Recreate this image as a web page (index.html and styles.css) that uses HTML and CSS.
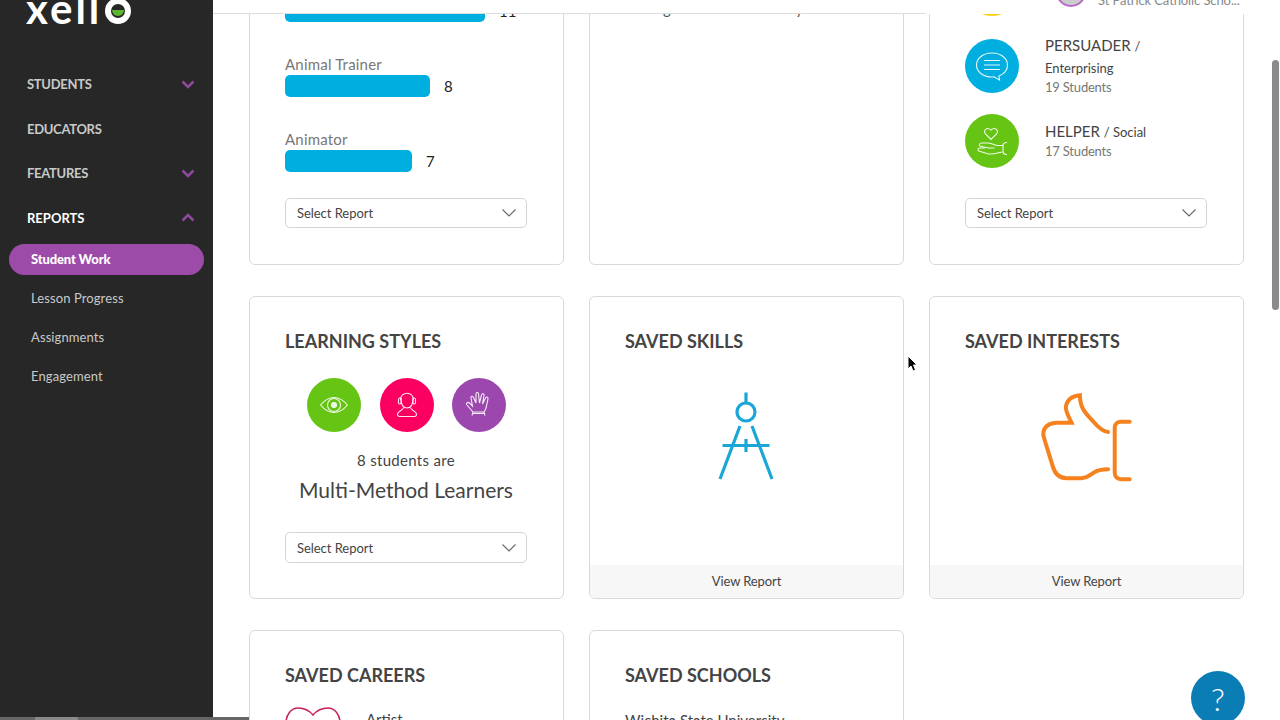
FILE: index.html
```html
<!DOCTYPE html>
<html lang="en">
<head>
    <meta charset="UTF-8">
    <title>Xello Reports</title>
    <link rel="stylesheet" href="styles.css">
</head>
<body>
    <!-- Sidebar -->
    <nav class="sidebar">
        <div class="logo"><span>xell</span><i class="logo-o"><b></b></i></div>
        <ul class="nav">
            <li class="nav-item">STUDENTS <svg class="chev" viewBox="0 0 14 9"><path d="M1.5 1.5L7 7l5.5-5.5"/></svg></li>
            <li class="nav-item">EDUCATORS</li>
            <li class="nav-item">FEATURES <svg class="chev" viewBox="0 0 14 9"><path d="M1.5 1.5L7 7l5.5-5.5"/></svg></li>
            <li class="nav-item active">REPORTS <svg class="chev" viewBox="0 0 14 9"><path d="M1.5 7.5L7 2l5.5 5.5"/></svg></li>
        </ul>
        <ul class="subnav">
            <li class="current">Student Work</li>
            <li>Lesson Progress</li>
            <li>Assignments</li>
            <li>Engagement</li>
        </ul>
    </nav>

    <!-- Report cards, scrolled part way down -->
    <main class="content">
        <div class="cards">
            <section class="card bottom">
                <div class="bars">
                    <div class="bar-row"><div class="bar-label">Animal Caretaker</div><div class="bar-line"><div class="bar" style="width:200px"></div><span>11</span></div></div>
                    <div class="bar-row"><div class="bar-label">Animal Trainer</div><div class="bar-line"><div class="bar" style="width:145px"></div><span>8</span></div></div>
                    <div class="bar-row"><div class="bar-label">Animator</div><div class="bar-line"><div class="bar" style="width:127px"></div><span>7</span></div></div>
                </div>
                <div class="select">Select Report <svg class="select-arrow" viewBox="0 0 14 8"><path d="M.5.5L7 7l6.5-6.5"/></svg></div>
            </section>

            <section class="card middle-top">
                <p class="clipped-line">Management and Industry</p>
            </section>

            <section class="card bottom">
                <div class="types">
                    <div class="type first">
                        <div class="circle yellow"></div>
                    </div>
                    <div class="type">
                        <div class="circle blue">
                            <svg viewBox="0 0 54 54"><path d="M27 14c9 0 15.5 5.300 15.5 12 0 5-3.500 9-8.500 11l.5 4-5.500-3.200c-.7.1-1.400.2-2 .2-9 0-15.500-5.300-15.500-12S18 14 27 14z"/><path d="M19 21.500h16M19 26h16M19 30.500h16"/></svg>
                        </div>
                        <div class="type-text">
                            <div class="type-name">PERSUADER <small>/</small></div>
                            <div class="type-sub">Enterprising</div>
                            <div class="type-count">19 Students</div>
                        </div>
                    </div>
                    <div class="type">
                        <div class="circle green">
                            <svg viewBox="0 0 54 54"><path d="M26 25.500l-5.500-5.500c-3-3.500 1.500-7.500 5.500-4 4-3.500 8.500.5 5.500 4z"/><path d="M38 31.500h-6c-3-1-6-2.500-9-2.500h-6.500c-2 0-3 2.500-1 3.300l8 1.700h6"/><path d="M20 34h-5.500c-2 .5-2 2.800 0 3.300l9 2.700c5 .5 9-1 14-2"/><path d="M42 28.500c-2 0-4 1-4 3v6c0 2 2 3 4 3"/></svg>
                        </div>
                        <div class="type-text">
                            <div class="type-name">HELPER <small>/ Social</small></div>
                            <div class="type-count">17 Students</div>
                        </div>
                    </div>
                </div>
                <div class="select">Select Report <svg class="select-arrow" viewBox="0 0 14 8"><path d="M.5.5L7 7l6.5-6.5"/></svg></div>
            </section>

            <section class="card">
                <h3>LEARNING STYLES</h3>
                <div class="styles">
                    <div class="circle green">
                        <svg viewBox="0 0 54 54"><path d="M13.500 27C22 17 32 17 40.500 27 32 37 22 37 13.500 27z"/><circle cx="27" cy="27" r="6.500"/><circle class="fill" cx="27" cy="27" r="2.500"/></svg>
                    </div>
                    <div class="circle pink">
                        <svg viewBox="0 0 54 54"><path d="M20.500 22c0-9 13-9 13 0"/><path d="M21 20c0 7 2 10 6 10s6-3 6-10"/><rect x="18.500" y="20" width="2.500" height="6" rx="1.200"/><rect x="33" y="20" width="2.500" height="6" rx="1.200"/><path d="M23.500 29.500c0 3-6 3.500-6 6.500 0 1.500.5 2.500 2 2.500h15c1.500 0 2-1 2-2.500 0-3-6-3.500-6-6.500"/></svg>
                    </div>
                    <div class="circle purple">
                        <svg viewBox="0 0 54 54"><path d="M21 34l-6-7c-1.500-2 1-3.500 2.500-2l3 3-1.500-8c-.5-2 2-2.500 2.500-.5L24 25v-9c0-2 2.500-2 2.500 0l1 9 2-8c.5-2 3-1.500 2.500.5l-1.500 8.500 3-6c1-1.800 3-.8 2.500 1L34 30c-.5 2-1.500 3-2 4z"/><path d="M21 34l-1 3.500M32 34l1 3.500M21 35.500h11"/></svg>
                    </div>
                </div>
                <p class="styles-count">8 students are</p>
                <p class="styles-name">Multi-Method Learners</p>
                <div class="select">Select Report <svg class="select-arrow" viewBox="0 0 14 8"><path d="M.5.5L7 7l6.5-6.500"/></svg></div>
            </section>

            <section class="card with-footer">
                <h3>SAVED SKILLS</h3>
                <svg class="big-icon compass" width="60" height="92" viewBox="0 0 60 92">
                    <path d="M30 1.500v11"/><circle cx="30" cy="21" r="9"/>
                    <path d="M24 35L4 88M36 35l20 53M6.500 54.500h47M30 48v13"/>
                </svg>
                <a class="view-report">View Report</a>
            </section>

            <section class="card with-footer">
                <h3>SAVED INTERESTS</h3>
                <svg class="big-icon thumbs-up" width="93" height="92" viewBox="30 30 280 276">
                    <path d="M235 153c-16 0-30-14-46-33-14-15-27-27-34-46-3-10-5-22-5-32-22 2-38 14-42 33-2 16 8 32 17 50H80c-24 0-40 14-40 34 0 6 2 12 4 18l24 78c6 22 20 37 42 37h44c16 0 26-8 38-17 12-8 22-10 43-10"/>
                    <path d="M300 122h-26c-12 0-19 8-19 18v135c0 12 7 20 19 20h26"/>
                </svg>
                <a class="view-report">View Report</a>
            </section>

            <section class="card">
                <h3>SAVED CAREERS</h3>
                <div class="saved-row">
                    <svg class="heart" width="56" height="48" viewBox="0 0 56 48"><path d="M28 8C23 2 17 1 13 1 6 1 1 8 1 16c0 14 15 24 27 31 12-7 27-17 27-31 0-8-5-15-12-15-4 0-10 1-15 7z"/></svg>
                    <span class="saved-text">Artist</span>
                </div>
            </section>

            <section class="card">
                <h3>SAVED SCHOOLS</h3>
                <p class="school">Wichita State University</p>
            </section>
        </div>
    </main>

    <div class="scrollbar"><div class="scroll-thumb"></div></div>

    <!-- Top bar lies over the scrolled cards -->
    <header class="topbar">
        <div class="topbar-line"></div>
        <div class="user">
            <div class="avatar"></div>
            <span>St Patrick Catholic Scho...</span>
        </div>
    </header>

    <div class="hscroll"><div class="hthumb"></div></div>
    <button class="help">?</button>
    <svg class="cursor" width="12" height="18" viewBox="0 0 12 18"><path d="M1 1v13l3-3 2 5 2.500-1-2-5H10z"/></svg>
</body>
</html>
```

FILE: styles.css
```css
* {
    box-sizing: border-box;
}
html, body {
    height: 100%;
}
body {
    margin: 0;
    display: flex;
    position: relative;
    overflow: hidden;
    background: white;
    color: #444;
    font-family: Lato, "Open Sans", Arial, sans-serif;
}
p, h3, ul {
    margin: 0;
    padding: 0;
}
ul {
    list-style: none;
}

/* sidebar */
.sidebar {
    width: 213px;
    flex: none;
    background-color: #272727;
    color: #c9c9c9;
    overflow: hidden;
}
.logo {
    display: flex;
    align-items: flex-end;
    height: 24px;
    margin-left: 26px;
    color: white;
    font-size: 42px;
    font-weight: 700;
    letter-spacing: 3px;
    line-height: 24px;
}
.logo span {
    height: 32px;
    margin-top: -8px;
    line-height: 32px;
}
.logo-o {
    display: flex;
    align-items: flex-end;
    justify-content: center;
    width: 26px;
    height: 26px;
    margin-left: 3px;
    padding-bottom: 2px;
    border: 6px solid white;
    border-radius: 50%;
    flex: none;
}
.logo-o b {
    width: 12px;
    height: 6px;
    background: #5cb531;
    border-radius: 0 0 6px 6px;
}
.nav {
    margin-top: 38px;
    padding: 0 18px 0 27px;
}
.nav-item {
    display: flex;
    justify-content: space-between;
    align-items: center;
    height: 44.5px;
    font-size: 13px;
    font-weight: 700;
    letter-spacing: -.3px;
}
.nav-item.active {
    color: white;
    letter-spacing: 0;
}
.chev {
    width: 14px;
    height: 9px;
    fill: none;
    stroke: #8e4a9e;
    stroke-width: 2.5;
}
.subnav {
    padding: 0 9px;
    margin-top: 4px;
    font-size: 13px;
}
.subnav li {
    height: 39px;
    padding-left: 22px;
    line-height: 31px;
    letter-spacing: .1px;
}
.subnav .current {
    height: 31px;
    margin-bottom: 8px;
    background: #9c4ba8;
    border-radius: 16px;
    color: white;
    font-weight: 900;
    letter-spacing: -.15px;
}

/* cards */
.content {
    flex: 1;
    min-width: 0;
    padding-left: 36px;
}
.cards {
    display: grid;
    grid-template-columns: repeat(3, 315px);
    grid-template-rows: 365px 303px 303px;
    gap: 31px 25px;
    margin-top: -100px;
}
.card {
    display: flex;
    flex-direction: column;
    padding: 34px 36px 35px 35px;
    background: white;
    border: 1px solid #d9d9d9;
    border-radius: 6px;
}
.card.bottom {
    justify-content: flex-end;
    padding-bottom: 36px;
}
.middle-top {
    padding-top: 97px;
}
.clipped-line {
    font-size: 15px;
    line-height: 20px;
    letter-spacing: .25px;
    color: #555;
}
h3 {
    font-size: 18px;
    font-weight: 700;
    line-height: 20px;
    color: #444;
}
.select {
    display: flex;
    justify-content: space-between;
    align-items: center;
    flex: none;
    height: 31px;
    padding: 0 10px 0 11px;
    border: 1px solid #d5d5d5;
    border-radius: 5px;
    font-size: 13px;
    letter-spacing: -.05px;
    color: #444;
}
.bottom .select {
    height: 30px;
}
.select-arrow {
    width: 14px;
    height: 8px;
    fill: none;
    stroke: #666;
    stroke-width: 1.1;
}

/* bar chart */
.bars {
    display: flex;
    flex-direction: column;
    gap: 32px;
    margin-bottom: 26px;
}
.bar-label {
    font-size: 15px;
    line-height: 21px;
    letter-spacing: .2px;
    color: #777;
}
.bar-line {
    display: flex;
    align-items: center;
    gap: 14px;
    font-size: 15px;
    color: #222;
}
.bar {
    height: 22px;
    background: #00aee0;
    border-radius: 5px;
}

/* personality types */
.types {
    display: flex;
    flex-direction: column;
    gap: 21px;
    margin-bottom: 30px;
}
.type {
    display: flex;
    align-items: center;
    gap: 26px;
    height: 54px;
}
.type.first {
    margin-bottom: 2px;
}
.type-text {
    flex: 1;
    margin-top: -2px;
}
.type-name {
    font-size: 15px;
    line-height: 22px;
    color: #444;
}
.type-name small {
    font-size: 13px;
}
.type-sub {
    font-size: 13px;
    line-height: 22px;
    color: #444;
}
.type-count {
    font-size: 13px;
    line-height: 17px;
    letter-spacing: -.2px;
    color: #777;
}
.circle {
    width: 54px;
    height: 54px;
    flex: none;
    border-radius: 50%;
}
.circle svg {
    display: block;
    width: 54px;
    height: 54px;
    fill: none;
    stroke: white;
    stroke-width: 1.1;
    opacity: .9;
}
.circle svg .fill {
    fill: white;
}
.yellow { background: #fcd116; }
.blue { background: #00aee0; }
.green { background: #66c414; }
.pink { background: #fb0060; }
.purple { background: #9c47ae; }

/* learning styles */
.styles {
    display: flex;
    justify-content: center;
    gap: 18.5px;
    margin-top: 27px;
    margin-left: 1px;
}
.styles-count {
    margin-top: 17px;
    font-size: 15px;
    line-height: 22px;
    letter-spacing: .3px;
    text-align: center;
}
.styles-name {
    margin-top: 4px;
    margin-bottom: 27px;
    font-size: 21px;
    line-height: 30px;
    text-align: center;
}

/* saved cards */
.with-footer {
    padding-bottom: 0;
    padding-left: 0;
    padding-right: 0;
}
.with-footer h3 {
    padding-left: 35px;
}
.big-icon {
    display: block;
    align-self: center;
    margin-top: 40px;
    fill: none;
}
.compass {
    margin-right: 2px;
    stroke: #1aa7d8;
    stroke-width: 3.2;
}
.thumbs-up {
    stroke: #f5821f;
    stroke-width: 12;
    stroke-linecap: round;
}
.view-report {
    display: block;
    margin-top: auto;
    height: 33px;
    background: #f7f7f7;
    font-size: 13px;
    line-height: 33px;
    letter-spacing: -.1px;
    text-align: center;
    border-radius: 0 0 5px 5px;
}
.saved-row {
    display: flex;
    gap: 25px;
    margin-top: 22px;
}
.heart {
    fill: none;
    stroke: #c41e5b;
    stroke-width: 1.5;
}
.saved-text, .school {
    font-size: 15px;
    line-height: 20px;
    color: #444;
}
.saved-text {
    margin-top: 2px;
}
.school {
    margin-top: 25px;
}

/* overlays */
.scrollbar {
    width: 9px;
    flex: none;
    background: white;
}
.scroll-thumb {
    width: 7px;
    height: 250px;
    margin: 60px 0 0 1px;
    background: #8a8a8a;
    border-radius: 4px;
}
.topbar {
    position: absolute;
    top: 0;
    left: 213px;
    right: 9px;
    height: 14px;
    display: flex;
    overflow: hidden;
    background: white;
}
.topbar-line {
    width: 713px;
    height: 14px;
    flex: none;
    border-bottom: 1px solid #ddd;
}
.user {
    display: flex;
    align-items: flex-end;
    gap: 12px;
    height: 7px;
    padding-left: 130px;
    font-size: 13px;
    line-height: 13px;
    letter-spacing: -.1px;
    color: #888;
    white-space: nowrap;
}
.avatar {
    width: 30px;
    height: 30px;
    flex: none;
    background: #ccc;
    border: 2px solid #b968c8;
    border-radius: 50%;
}
.hscroll {
    position: absolute;
    left: 0;
    bottom: 0;
    width: 249px;
    height: 3px;
    background: #666;
}
.hthumb {
    width: 43px;
    height: 3px;
    margin-left: 35px;
    background: #8a8a8a;
}
.help {
    position: absolute;
    right: 35px;
    bottom: -5px;
    width: 54px;
    height: 54px;
    padding: 0;
    background: #0a7db5;
    border: none;
    border-radius: 50%;
    color: white;
    font-family: inherit;
    font-size: 32px;
    font-weight: 300;
}
.cursor {
    position: absolute;
    left: 907px;
    top: 355px;
    fill: black;
    stroke: white;
    stroke-width: 1;
}
```
